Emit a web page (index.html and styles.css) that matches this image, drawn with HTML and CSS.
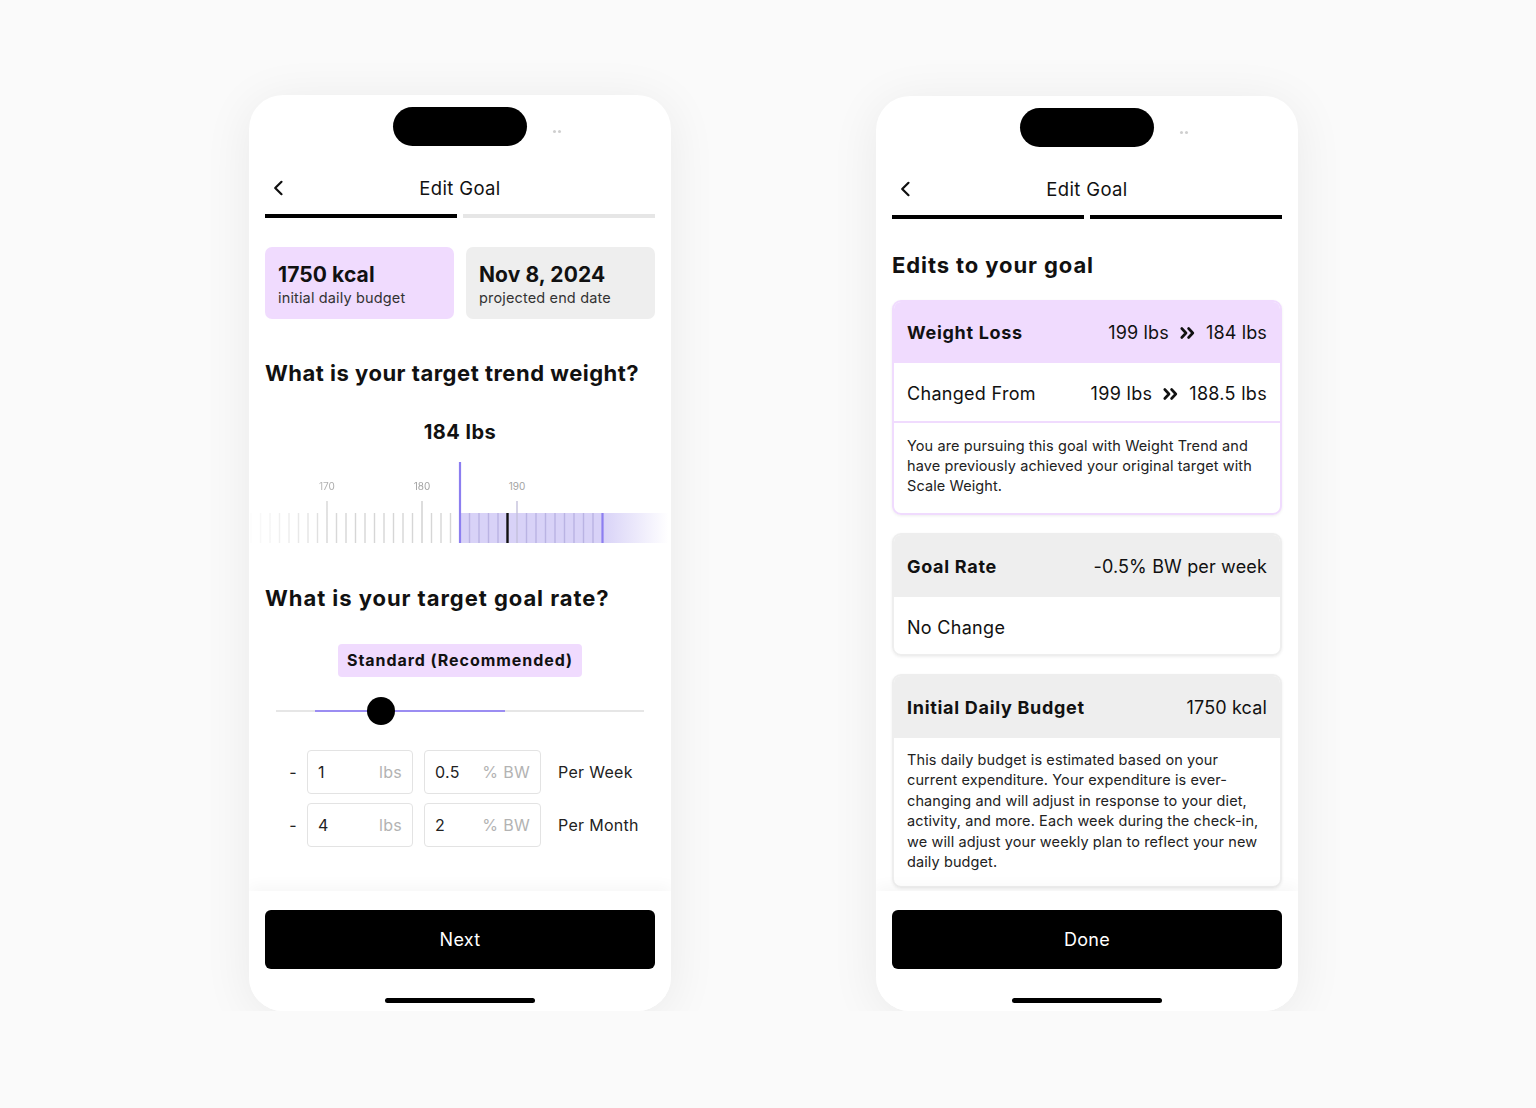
FILE: index.html
```html
<!DOCTYPE html>
<html lang="en">
<head>
<meta charset="utf-8">
<title>Edit Goal</title>
<link rel="stylesheet" href="styles.css">
</head>
<body>
<div class="stage">
  <section class="phone">
    <div class="status"><div class="island"></div><div class="dots"><i></i><i></i></div></div>
    <header class="nav">
      <svg class="back" viewBox="0 0 12 16" aria-hidden="true"><path d="M9.5 1.8 L3.2 8 L9.5 14.2"/></svg>
      <h1 class="title">Edit Goal</h1>
      <span></span>
    </header>
    <div class="steps"><span class="step on"></span><span class="step"></span></div>
    <main class="content">
      <div class="stats">
        <div class="stat stat-purple"><div class="stat-value">1750 kcal</div><div class="stat-label">initial daily budget</div></div>
        <div class="stat stat-grey"><div class="stat-value">Nov 8, 2024</div><div class="stat-label">projected end date</div></div>
      </div>
      <h2 class="q q-first">What is your target trend weight?</h2>
      <div class="weight">184 lbs</div>
      <svg class="ruler" viewBox="0 0 422 81" aria-hidden="true">
        <defs>
          <linearGradient id="fadeL" x1="0" x2="1" y1="0" y2="0">
            <stop offset="0" stop-color="#fff" stop-opacity="0.05"/>
            <stop offset="0.22" stop-color="#fff" stop-opacity="1"/>
            <stop offset="1" stop-color="#fff" stop-opacity="1"/>
          </linearGradient>
          <mask id="maskL"><rect x="0" y="0" width="422" height="81" fill="url(#fadeL)"/></mask>
          <linearGradient id="bandFade" x1="0" x2="1" y1="0" y2="0">
            <stop offset="0" stop-color="#d8d2f7" stop-opacity="1"/>
            <stop offset="1" stop-color="#d8d2f7" stop-opacity="0"/>
          </linearGradient>
        </defs>
        <rect x="211" y="51" width="142.5" height="30" fill="#d8d2f7"/>
        <rect x="353.5" y="51" width="66" height="30" fill="url(#bandFade)"/>
        <g mask="url(#maskL)" stroke="#d6d6d6" stroke-width="1.4">
          <line x1="2" y1="51" x2="2" y2="81"/>
          <line x1="11.5" y1="51" x2="11.5" y2="81"/>
          <line x1="21" y1="51" x2="21" y2="81"/>
          <line x1="30.5" y1="51" x2="30.5" y2="81"/>
          <line x1="40" y1="51" x2="40" y2="81"/>
          <line x1="49.5" y1="51" x2="49.5" y2="81"/>
          <line x1="59" y1="51" x2="59" y2="81"/>
          <line x1="68.5" y1="51" x2="68.5" y2="81"/>
          <line x1="78" y1="39" x2="78" y2="81" stroke="#cfcfcf"/>
          <line x1="87.5" y1="51" x2="87.5" y2="81"/>
          <line x1="97" y1="51" x2="97" y2="81"/>
          <line x1="106.5" y1="51" x2="106.5" y2="81"/>
          <line x1="116" y1="51" x2="116" y2="81"/>
          <line x1="125.5" y1="51" x2="125.5" y2="81"/>
          <line x1="135" y1="51" x2="135" y2="81"/>
          <line x1="144.5" y1="51" x2="144.5" y2="81"/>
          <line x1="154" y1="51" x2="154" y2="81"/>
          <line x1="163.5" y1="51" x2="163.5" y2="81"/>
          <line x1="173" y1="39" x2="173" y2="81" stroke="#cfcfcf"/>
          <line x1="182.5" y1="51" x2="182.5" y2="81"/>
          <line x1="192" y1="51" x2="192" y2="81"/>
          <line x1="201.5" y1="51" x2="201.5" y2="81"/>
          <text x="78" y="28" class="tick-label">170</text>
          <text x="173" y="28" class="tick-label">180</text>
        </g>
        <g stroke="#bab3e3" stroke-width="1.4">
          <line x1="220.5" y1="51" x2="220.5" y2="81"/>
          <line x1="230" y1="51" x2="230" y2="81"/>
          <line x1="239.5" y1="51" x2="239.5" y2="81"/>
          <line x1="249" y1="51" x2="249" y2="81"/>
          <line x1="268" y1="39" x2="268" y2="81" stroke="#c4c0dc"/>
          <line x1="277.5" y1="51" x2="277.5" y2="81"/>
          <line x1="287" y1="51" x2="287" y2="81"/>
          <line x1="296.5" y1="51" x2="296.5" y2="81"/>
          <line x1="306" y1="51" x2="306" y2="81"/>
          <line x1="315.5" y1="51" x2="315.5" y2="81"/>
          <line x1="325" y1="51" x2="325" y2="81"/>
          <line x1="334.5" y1="51" x2="334.5" y2="81"/>
          <line x1="344" y1="51" x2="344" y2="81"/>
        </g>
        <text x="268" y="28" class="tick-label">190</text>
        <line x1="258.5" y1="51" x2="258.5" y2="81" stroke="#111" stroke-width="2.4"/>
        <line x1="353.5" y1="51" x2="353.5" y2="81" stroke="#8c7ef0" stroke-width="2.2"/>
        <line x1="211" y1="0" x2="211" y2="81" stroke="#8c7ef0" stroke-width="2.2"/>
      </svg>
      <h2 class="q q-second">What is your target goal rate?</h2>
      <div class="pill-row"><span class="pill">Standard (Recommended)</span></div>
      <div class="slider"><span class="thumb"></span></div>
      <div class="rates">
        <div class="rate">
          <span class="dash">-</span>
          <div class="field f-lbs"><span>1</span><span class="unit">lbs</span></div>
          <div class="field f-bw"><span>0.5</span><span class="unit">% BW</span></div>
          <span class="per">Per Week</span>
        </div>
        <div class="rate">
          <span class="dash">-</span>
          <div class="field f-lbs"><span>4</span><span class="unit">lbs</span></div>
          <div class="field f-bw"><span>2</span><span class="unit">% BW</span></div>
          <span class="per">Per Month</span>
        </div>
      </div>
    </main>
    <footer class="footer"><button class="cta">Next</button><div class="home"></div></footer>
  </section>

  <section class="phone phone-b">
    <div class="status"><div class="island"></div><div class="dots"><i></i><i></i></div></div>
    <header class="nav">
      <svg class="back" viewBox="0 0 12 16" aria-hidden="true"><path d="M9.5 1.8 L3.2 8 L9.5 14.2"/></svg>
      <h1 class="title">Edit Goal</h1>
      <span></span>
    </header>
    <div class="steps"><span class="step on"></span><span class="step on"></span></div>
    <main class="content">
      <h2 class="q q-edits">Edits to your goal</h2>
      <div class="card card-purple">
        <div class="card-head"><span class="card-key">Weight Loss</span><span class="card-val">199 lbs<svg class="chev" viewBox="0 0 15 12" aria-hidden="true"><path d="M1.8 1.5 L6 6 L1.8 10.5 M8.6 1.5 L12.8 6 L8.6 10.5"/></svg>184 lbs</span></div>
        <div class="card-row row-sep"><span>Changed From</span><span class="card-val">199 lbs<svg class="chev" viewBox="0 0 15 12" aria-hidden="true"><path d="M1.8 1.5 L6 6 L1.8 10.5 M8.6 1.5 L12.8 6 L8.6 10.5"/></svg>188.5 lbs</span></div>
        <p class="card-note">You are pursuing this goal with Weight Trend and have previously achieved your original target with Scale Weight.</p>
      </div>
      <div class="card card-grey">
        <div class="card-head"><span class="card-key">Goal Rate</span><span class="card-val">-0.5% BW per week</span></div>
        <div class="card-row row-low"><span>No Change</span></div>
      </div>
      <div class="card card-grey card-last">
        <div class="card-head"><span class="card-key">Initial Daily Budget</span><span class="card-val">1750 kcal</span></div>
        <p class="card-note note-long">This daily budget is estimated based on your current expenditure. Your expenditure is ever-changing and will adjust in response to your diet, activity, and more. Each week during the check-in, we will adjust your weekly plan to reflect your new daily budget.</p>
      </div>
    </main>
    <footer class="footer"><button class="cta">Done</button><div class="home"></div></footer>
  </section>
</div>
</body>
</html>
```

FILE: styles.css
```css
* { box-sizing: border-box; }

body {
  margin: 0;
  background: #fafafa;
  font-family: Inter, "Noto Sans", sans-serif;
  color: #111;
}

.stage {
  display: flex;
  gap: 205px;
  padding: 95px 0 0 249px;
}

.phone {
  width: 422px;
  height: 916px;
  background: #fff;
  border-radius: 34px;
  box-shadow: 0 6px 50px rgba(0, 0, 0, 0.07);
  display: flex;
  flex-direction: column;
  overflow: hidden;
  flex-shrink: 0;
}

.phone-b {
  margin-top: 1px;
  height: 915px;
}

.status {
  position: relative;
  height: 39px;
  margin-top: 12px;
  display: flex;
  justify-content: center;
  flex-shrink: 0;
}

.island {
  width: 134px;
  height: 39px;
  background: #000;
  border-radius: 20px;
}

.dots {
  position: absolute;
  left: 304px;
  top: 23px;
  display: flex;
  gap: 2px;
}

.dots i {
  width: 3px;
  height: 3px;
  border-radius: 50%;
  background: #cfcfcf;
}

.nav {
  height: 40px;
  margin-top: 22px;
  padding: 0 16px;
  display: grid;
  grid-template-columns: 1fr auto 1fr;
  align-items: center;
  flex-shrink: 0;
}

.back {
  width: 12px;
  height: 16px;
  margin-left: 7px;
  fill: none;
  stroke: #111;
  stroke-width: 2.2;
  stroke-linecap: round;
  stroke-linejoin: round;
}

.title {
  margin: 0;
  font-size: 18.5px;
  font-weight: 400;
  line-height: 24px;
  letter-spacing: 0.35px;
  color: #111;
}

.steps {
  display: flex;
  gap: 6px;
  padding: 0 16px;
  margin-top: 6px;
  flex-shrink: 0;
}

.step {
  flex: 1;
  height: 4px;
  background: #e6e6e6;
}

.step.on { background: #000; }

.content {
  flex: 1;
  min-height: 0;
  overflow: hidden;
  padding: 0 16px;
}

/* stats */
.stats {
  display: grid;
  grid-template-columns: 1fr 1fr;
  gap: 12px;
  margin-top: 29px;
}

.stat {
  height: 72px;
  border-radius: 7px;
  padding: 15px 13px 0;
}

.stat-purple { background: #f0dbfe; }
.stat-grey { background: #eeeeee; }

.stat-value {
  font-size: 21px;
  font-weight: 700;
  line-height: 26px;
  letter-spacing: 0.1px;
}

.stat-label {
  font-size: 14.5px;
  line-height: 20px;
  letter-spacing: 0.15px;
  color: #333;
}

.q {
  margin: 0;
  font-size: 22px;
  font-weight: 700;
  line-height: 28px;
  letter-spacing: 0.9px;
  color: #111;
}

.q-first { margin-top: 40px; letter-spacing: 0.5px; }
.q-second { margin-top: 41px; letter-spacing: 0.95px; }
.q-edits { margin-top: 32px; letter-spacing: 0.9px; }

.weight {
  margin-top: 32px;
  text-align: center;
  font-size: 20px;
  font-weight: 700;
  line-height: 26px;
  letter-spacing: 0.5px;
}

.ruler {
  display: block;
  width: 422px;
  height: 81px;
  margin: 17px -16px 0;
}

.tick-label {
  font-family: Inter, "Noto Sans", sans-serif;
  font-size: 10px;
  fill: #a3a3a3;
  stroke: none;
  text-anchor: middle;
}

.pill-row {
  display: flex;
  justify-content: center;
  margin-top: 32px;
}

.pill {
  background: #f0dbfe;
  border-radius: 4px;
  height: 33px;
  line-height: 33px;
  padding: 0 9px;
  font-size: 16px;
  font-weight: 700;
  letter-spacing: 0.95px;
  color: #111;
}

.slider {
  height: 28px;
  margin: 20px 11px 0;
  display: flex;
  align-items: center;
  background:
    linear-gradient(#9b8df2, #9b8df2) 39px 50% / 190px 2px no-repeat,
    linear-gradient(#e6e6e6, #e6e6e6) 0 50% / 100% 2px no-repeat;
}

.thumb {
  width: 28px;
  height: 28px;
  border-radius: 50%;
  background: #000;
  margin-left: 91px;
}

.rates {
  margin-top: 25px;
  padding-left: 14px;
  display: flex;
  flex-direction: column;
  gap: 9px;
}

.rate {
  display: flex;
  align-items: center;
  font-size: 16px;
  letter-spacing: 0.3px;
  color: #222;
}

.dash {
  width: 28px;
  text-align: center;
}

.field {
  height: 44px;
  border: 1px solid #e3e3e3;
  border-radius: 4px;
  display: flex;
  justify-content: space-between;
  align-items: center;
  padding: 0 10px;
}

.f-lbs { width: 106px; }
.f-bw { width: 117px; margin-left: 11px; }

.unit { color: #b3b3b3; }

.per { margin-left: 17px; }

/* footer */
.footer {
  position: relative;
  height: 120px;
  flex-shrink: 0;
  padding-top: 19px;
  background: #fff;
  display: flex;
  flex-direction: column;
  align-items: center;
  box-shadow: 0 -5px 14px rgba(0, 0, 0, 0.035);
}

.cta {
  width: 390px;
  height: 59px;
  background: #000;
  color: #fff;
  border: 0;
  border-radius: 6px;
  font-family: Inter, "Noto Sans", sans-serif;
  font-size: 18px;
  font-weight: 400;
  letter-spacing: 0.3px;
}

.home {
  width: 150px;
  height: 5px;
  border-radius: 3px;
  background: #000;
  margin-top: 29px;
}

/* cards (right phone) */
.card {
  margin-top: 18px;
  border: 2px solid #eeeeee;
  border-radius: 9px;
  overflow: hidden;
  box-shadow: 0 1px 3px rgba(0, 0, 0, 0.07);
}

.card-purple {
  margin-top: 21px;
  border-color: #f0dbfe;
}

.card-head {
  height: 61px;
  padding: 0 13px;
  display: flex;
  justify-content: space-between;
  align-items: center;
  font-size: 18px;
  letter-spacing: 0.15px;
  color: #111;
}

.card-purple .card-head { background: #f0dbfe; }
.card-grey .card-head { background: #eeeeee; height: 62px; }

.card-key {
  font-weight: 700;
  letter-spacing: 0.7px;
}

.card-val {
  display: flex;
  align-items: center;
}

.chev {
  width: 15px;
  height: 12px;
  margin: 0 11px;
  fill: none;
  stroke: #111;
  stroke-width: 2.6;
  stroke-linecap: round;
  stroke-linejoin: round;
}

.card-row {
  height: 60px;
  padding: 0 13px;
  display: flex;
  justify-content: space-between;
  align-items: center;
  font-size: 18px;
  letter-spacing: 0.3px;
  color: #111;
}

.row-sep {
  border-bottom: 2px solid #f0dbfe;
  padding-top: 3px;
}

.row-low {
  height: 57px;
  padding-top: 4px;
}

.card-note {
  margin: 0;
  padding: 13px 13px 17px;
  font-size: 14.5px;
  line-height: 20px;
  letter-spacing: 0.1px;
  color: #222;
}

.note-long {
  padding: 12px 13px 14px;
  line-height: 20.4px;
}
```
